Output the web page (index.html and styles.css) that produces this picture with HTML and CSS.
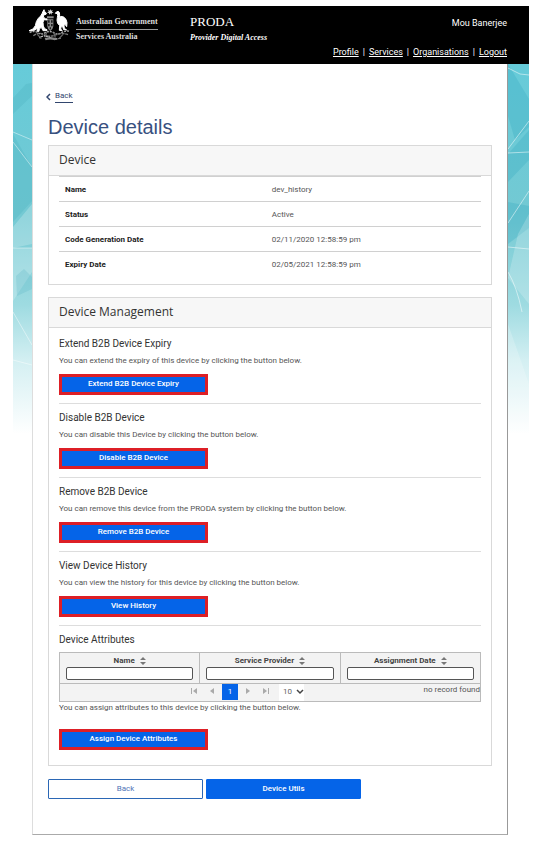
FILE: index.html
```html
<!DOCTYPE html>
<html lang="en">
<head>
  <meta charset="UTF-8" />
  <meta name="viewport" content="width=device-width, initial-scale=1.0" />
  <title>PRODA - Device details</title>
  <link rel="stylesheet" href="styles.css">
</head>
<body>

  <header class="topbar">
    <div class="brand">
      <svg class="crest" viewBox="0 0 132 96" fill="#fff" aria-hidden="true">
        <!-- star -->
        <path d="M67 0l2 5 5-2-2 5 5 3-6 1 0 5-4-4-4 4 0-5-6-1 5-3-2-5 5 2z" fill="#ddd"/>
        <!-- kangaroo -->
        <path stroke="#fff" stroke-width="3" d="M45 7l3-5 2 6 5 4-1 4-6 1-2 7 6 5 6 1-1 3-9-1-3 8 1 11 4 8 7 3v3H45l-5-10-6 5-1 7h-6l2-10-8 6-11 3-7-1 12-5 7-10 3-12 6-10 7-7 4-7z"/>
        <!-- emu -->
        <path stroke="#fff" stroke-width="3" d="M85 9l5-2 4 3 1 8-1 8 5-4 8 2 7 7 3 10-1 12-5-7-3 4 1 8 7 5-9-1-3-9-4-1-2 8 5 5-9-1 1-14-6-7-2-9 1-8 1-7-1-5-6-1z"/>
        <!-- shield and crest -->
        <path d="M57 22h20v6H57zM58 31h18v21q-1 9-9 14-8-5-9-14z" fill="#8a8a8a"/>
        <path d="M60 34h5v7h-5zM69 34h5v7h-5zM60 45h5v7h-5zM69 45h5v7h-5zM65 55h4v6h-4z" fill="#222"/>
        <!-- wattle and scroll -->
        <g fill="none" stroke="#aaa" stroke-width="4">
          <path d="M5 71q14-7 24 0t23 0 25 0 24 0 25-4" stroke-dasharray="6 3"/>
          <path d="M16 80q15-12 31-3t35 1 38-1" stroke="#777" stroke-dasharray="9 2"/>
          <path d="M34 87q14-11 30-2t34 2" stroke="#bbb" stroke-dasharray="12 3"/>
          <path d="M28 76l12 13M105 76L93 89M56 70l-5 15M77 70l5 16" stroke="#666"/>
        </g>
        <path d="M50 88q17-7 34 0l-3 6q-14-5-28 0z" fill="#888"/>
      </svg>
      <div class="agency">
        <span class="agency-gov">Australian Government</span>
        <span class="agency-name">Services Australia</span>
      </div>
    </div>
    <div class="product">
      <div class="product-name">PRODA</div>
      <div class="product-tag">Provider Digital Access</div>
    </div>
    <div class="account">
      <div class="user">Mou Banerjee</div>
      <nav class="topnav">
        <a href="#">Profile</a><span>|</span><a href="#">Services</a><span>|</span><a href="#">Organisations</a><span>|</span><a href="#">Logout</a>
      </nav>
    </div>
  </header>

  <div class="stage">
    <svg class="side-art" viewBox="0 0 19 370" preserveAspectRatio="none" aria-hidden="true">
      <defs>
        <linearGradient id="fade" x1="0" y1="0" x2="0" y2="1">
          <stop offset="0" stop-color="#66cbd9"/>
          <stop offset=".4" stop-color="#73c9d3"/>
          <stop offset=".65" stop-color="#9edbe1"/>
          <stop offset=".8" stop-color="#d3eff2"/>
          <stop offset="1" stop-color="#fff"/>
        </linearGradient>
      </defs>
      <path fill="url(#fade)" d="M0 0h19v370H0z"/>
      <path fill="#4fb5c2" opacity=".35" d="M0 34l13-14 6-1v13L0 50zM0 70l19 33v34L0 158z"/>
      <path fill="#fff" opacity=".22" d="M0 163l19-23v40L0 184zM0 184h19v24L0 237z"/>
      <path fill="#58b5c2" opacity=".25" d="M3 212l8-7 8 8v12L4 232z"/>
      <path fill="none" stroke="#fff" opacity=".45" d="M0 68l19 8M0 78l19 25M0 184h19M0 248l19 33M0 296l19 5"/>
    </svg>

    <main class="sheet">
      <a class="crumb" href="#">
        <svg viewBox="0 0 5 8" aria-hidden="true"><path d="M4 1L1 4l3 3" fill="none" stroke="#32466e" stroke-width="1.5"/></svg>
        <span>Back</span>
      </a>
      <h1>Device details</h1>

      <section class="card">
        <h2>Device</h2>
        <div class="card-body">
          <table class="details">
            <tr><th scope="row">Name</th><td>dev_history</td></tr>
            <tr><th scope="row">Status</th><td>Active</td></tr>
            <tr><th scope="row">Code Generation Date</th><td>02/11/2020 12:58:59 pm</td></tr>
            <tr><th scope="row">Expiry Date</th><td>02/05/2021 12:58:59 pm</td></tr>
          </table>
        </div>
      </section>

      <section class="card">
        <h2>Device Management</h2>
        <div class="card-body manage">
          <div class="action">
            <h3>Extend B2B Device Expiry</h3>
            <p>You can extend the expiry of this device by clicking the button below.</p>
            <button type="button" class="btn marked">Extend B2B Device Expiry</button>
          </div>
          <div class="action">
            <h3>Disable B2B Device</h3>
            <p>You can disable this Device by clicking the button below.</p>
            <button type="button" class="btn marked">Disable B2B Device</button>
          </div>
          <div class="action">
            <h3>Remove B2B Device</h3>
            <p>You can remove this device from the PRODA system by clicking the button below.</p>
            <button type="button" class="btn marked">Remove B2B Device</button>
          </div>
          <div class="action">
            <h3>View Device History</h3>
            <p>You can view the history for this device by clicking the button below.</p>
            <button type="button" class="btn marked">View History</button>
          </div>
          <div class="action attributes">
            <h3>Device Attributes</h3>
            <table class="grid">
              <thead>
                <tr>
                  <th scope="col">
                    <label for="f-name">Name <svg class="sort" viewBox="0 0 6 8" aria-hidden="true"><path d="M0 3l3-3 3 3zM0 5h6L3 8z"/></svg></label>
                    <input id="f-name" type="text">
                  </th>
                  <th scope="col">
                    <label for="f-provider">Service Provider <svg class="sort" viewBox="0 0 6 8" aria-hidden="true"><path d="M0 3l3-3 3 3zM0 5h6L3 8z"/></svg></label>
                    <input id="f-provider" type="text">
                  </th>
                  <th scope="col">
                    <label for="f-date">Assignment Date <svg class="sort" viewBox="0 0 6 8" aria-hidden="true"><path d="M0 3l3-3 3 3zM0 5h6L3 8z"/></svg></label>
                    <input id="f-date" type="text">
                  </th>
                </tr>
              </thead>
              <tfoot>
                <tr>
                  <td colspan="3">
                    <div class="pager">
                      <div class="pages">
                        <button type="button" aria-label="First page"><svg viewBox="0 0 6 6"><path d="M0 0h1v6H0zM6 0v6L2 3z"/></svg></button>
                        <button type="button" aria-label="Previous page"><svg viewBox="0 0 6 6"><path d="M5 0v6L1 3z"/></svg></button>
                        <button type="button" class="current">1</button>
                        <button type="button" aria-label="Next page"><svg viewBox="0 0 6 6"><path d="M1 0v6l4-3z"/></svg></button>
                        <button type="button" aria-label="Last page"><svg viewBox="0 0 6 6"><path d="M5 0h1v6H5zM0 0v6l4-3z"/></svg></button>
                        <div class="size">
                          <select aria-label="Rows per page"><option>10</option></select>
                          <svg viewBox="0 0 8 6" aria-hidden="true"><path d="M1 1l3 3 3-3" fill="none" stroke="#444" stroke-width="1.5"/></svg>
                        </div>
                      </div>
                      <span class="empty">no record found</span>
                    </div>
                  </td>
                </tr>
              </tfoot>
            </table>
            <p>You can assign attributes to this device by clicking the button below.</p>
            <button type="button" class="btn marked">Assign Device Attributes</button>
          </div>
        </div>
      </section>

      <div class="footer-actions">
        <button type="button" class="btn outline">Back</button>
        <button type="button" class="btn">Device Utils</button>
      </div>
    </main>

    <svg class="side-art" viewBox="0 0 21 370" preserveAspectRatio="none" aria-hidden="true">
      <path fill="url(#fade)" d="M0 0h21v370H0z"/>
      <path fill="#35aabf" opacity=".3" d="M0 0l21 35v28L7 76 0 52zM0 90l21-24v30L0 118zM0 138l21 4v22L0 180z"/>
      <path fill="#fff" opacity=".2" d="M10 170l11-20v90L0 214zM0 260l21 60v50H0z"/>
      <path fill="none" stroke="#fff" opacity=".5" d="M0 4l12 6 9 1M0 85l21-28M0 89l21-1M0 159l21-32M0 183l21 2M0 208q9 15 14 40"/>
    </svg>
  </div>

</body>
</html>
```

FILE: styles.css
```css
* {
  box-sizing: border-box;
}
body {
  margin: 6px 9px 8px 13px;
  background: #fff;
  color: #555;
  font-family: Roboto, "Open Sans", sans-serif;
  font-size: 8px;
  line-height: 12px;
}
h1, h2, h3, p {
  margin: 0;
  font-weight: 400;
}
button, input, select {
  font: inherit;
}

/* header */
.topbar {
  display: flex;
  min-height: 58px;
  padding: 3px 22px 6px 15px;
  background: #000;
  color: #fff;
}
.brand {
  display: flex;
  gap: 4px;
  width: 162px;
}
.crest {
  width: 44px;
  height: 32px;
}
.agency {
  padding-top: 7px;
  font-family: "Liberation Serif", serif;
  font-weight: 700;
  color: #ddd;
}
.agency span {
  display: block;
  white-space: nowrap;
}
.agency-gov {
  padding-bottom: 1px;
  border-bottom: 1px solid #999;
}
.agency-name {
  padding-top: 1px;
}
.product {
  padding-top: 5px;
  font-family: "Liberation Serif", serif;
  white-space: nowrap;
}
.product-name {
  font-size: 13px;
  line-height: 16px;
}
.product-tag {
  padding-top: 2px;
  font-style: italic;
  font-weight: 700;
}
.account {
  display: flex;
  flex-direction: column;
  justify-content: space-between;
  margin-left: auto;
  padding-top: 8px;
  font-size: 9px;
  text-align: right;
}
.topnav {
  display: flex;
  gap: 4px;
}
.topnav a {
  color: #fff;
}

/* page */
.stage {
  display: grid;
  grid-template-columns: 19px 1fr 21px;
}
.side-art {
  display: block;
  width: 100%;
  height: 370px;
}
.sheet {
  padding: 26px 15px 35px;
  background: #fff;
  border: 1px solid #ddd;
  border-top: 0;
  border-right-color: #999;
  border-bottom-color: #aaa;
}
.crumb {
  display: flex;
  align-items: center;
  gap: 4px;
  width: max-content;
  color: #32466e;
  text-decoration: none;
}
.crumb svg {
  width: 5px;
  height: 8px;
  margin-left: -2px;
}
.crumb span {
  border-bottom: 1px solid #32466e;
}
h1 {
  margin: 12px 0 6px;
  color: #38517f;
  font-family: "Liberation Sans", Arial, sans-serif;
  font-size: 20px;
  line-height: 24px;
}

/* cards */
.card {
  margin-bottom: 12px;
  border: 1px solid #d9d9d9;
}
.card h2 {
  padding: 5px 10px 6px;
  background: #f7f7f7;
  border-bottom: 1px solid #d9d9d9;
  color: #333;
  font-family: "Open Sans", "Noto Sans", sans-serif;
  font-size: 12px;
  line-height: 18px;
}
.card-body {
  padding: 0 10px 7px;
}
.details {
  width: 100%;
  border-collapse: collapse;
  table-layout: fixed;
}
.details th,
.details td {
  height: 25px;
  padding: 1px 6px 0;
  border-top: 1px solid #d0d0d0;
  text-align: left;
}
.details th {
  width: 49%;
  color: #222;
}

/* device management */
.manage {
  padding: 2px 10px 15px;
}
.action {
  padding: 6px 0 8px;
  border-bottom: 1px solid #ddd;
}
.action h3 {
  color: #333;
  font-size: 10px;
  line-height: 16px;
}
.action p {
  margin: 3px 0 7px;
}
.btn {
  display: block;
  width: 155px;
  height: 20px;
  padding: 0;
  border: 1px solid #0564e8;
  border-radius: 1px;
  background: #0564e8;
  color: #fff;
  font-weight: 500;
}
.btn.marked {
  width: 149px;
  height: 21px;
  border: 3px solid #dd1f26;
  border-radius: 0;
}
.btn.outline {
  border-color: #2b67b5;
  background: #fff;
  color: #5275b8;
  font-weight: 400;
}
.attributes {
  padding-bottom: 0;
  border-bottom: 0;
}
.attributes p {
  margin: 0 0 15px;
}

/* attributes grid */
.grid {
  width: 100%;
  margin-top: 4px;
  border-collapse: collapse;
  table-layout: fixed;
  background: #f3f3f3;
}
.grid th,
.grid td {
  border: 1px solid #bbb;
}
.grid th {
  padding: 2px 6px 3px;
  color: #444;
  text-align: center;
}
.grid label {
  display: flex;
  align-items: center;
  justify-content: center;
  gap: 5px;
}
.sort {
  width: 6px;
  height: 8px;
  fill: #777;
}
.grid input {
  display: block;
  width: 100%;
  height: 13px;
  border: 1px solid #555;
  border-radius: 2px;
  background: #fff;
}
.grid td {
  padding: 0;
}
.pager {
  display: flex;
  justify-content: space-between;
  height: 17px;
  padding-left: 30%;
}
.pages {
  display: flex;
  gap: 2px;
}
.pages button {
  width: 16px;
  height: 16px;
  padding: 0;
  border: 0;
  background: none;
}
.pages button svg {
  width: 6px;
  height: 6px;
  fill: #aaa;
}
.pages .current {
  background: #0564e8;
  color: #fff;
}
.size {
  display: grid;
  grid-template-columns: 17px 8px;
  align-items: center;
  margin-left: 3px;
  background: #fff;
}
.size select {
  grid-area: 1 / 1 / 2 / 3;
  width: 100%;
  padding: 0 0 0 4px;
  border: 0;
  background: none;
  color: #666;
  appearance: none;
}
.size svg {
  grid-area: 1 / 2;
  width: 8px;
  height: 6px;
  pointer-events: none;
}

.footer-actions {
  display: flex;
  gap: 3px;
  padding-top: 1px;
}
```
